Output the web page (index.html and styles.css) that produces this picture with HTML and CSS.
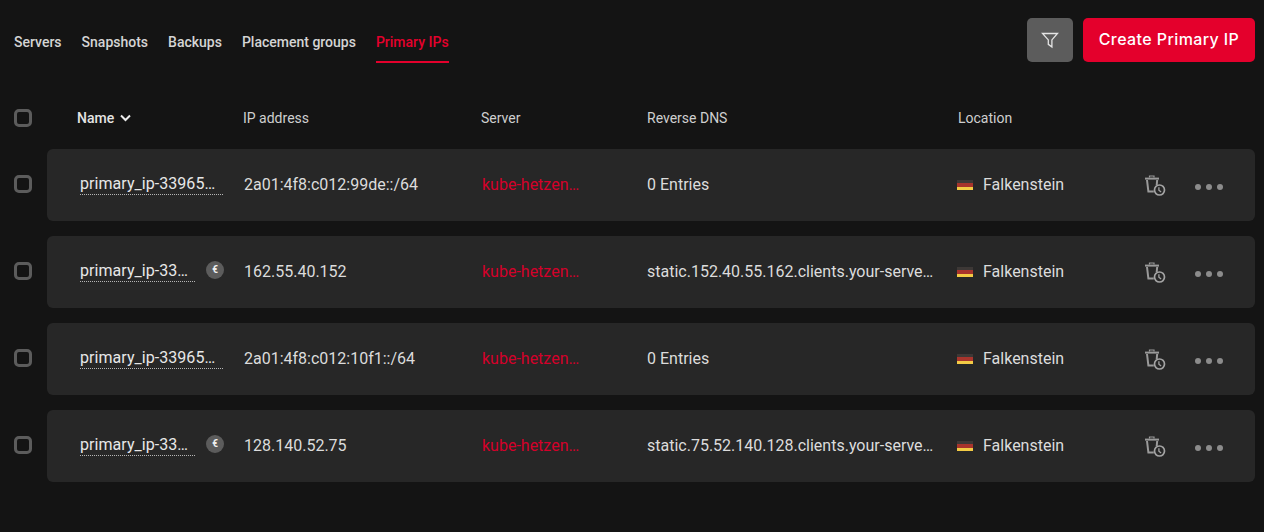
FILE: index.html
```html
<!DOCTYPE html>
<html lang="en">
<head>
<meta charset="utf-8">
<title>Primary IPs</title>
<link rel="stylesheet" href="styles.css">
</head>
<body>
<svg class="defs" width="0" height="0" aria-hidden="true">
  <symbol id="sched" viewBox="0 0 24 24">
    <path d="M0 3.6h14" fill="none" stroke="#9a9a9a" stroke-width="2"/>
    <path d="M4.5 2.6V1h4.5v1.6" fill="none" stroke="#9a9a9a" stroke-width="1.2"/>
    <path d="M2 5l1.4 11.6h5.4M12.2 5l-.5 5" fill="none" stroke="#9a9a9a" stroke-width="2"/>
    <circle cx="14.5" cy="15" r="5" fill="#272727" stroke="#a4a4a4" stroke-width="1.7"/>
    <path d="M13.9 12.2v3l2.2 1.9" fill="none" stroke="#a4a4a4" stroke-width="1.3"/>
  </symbol>
</svg>
<header class="topbar">
  <nav class="tabs">
    <a class="tab">Servers</a>
    <a class="tab">Snapshots</a>
    <a class="tab">Backups</a>
    <a class="tab">Placement groups</a>
    <a class="tab tab-active">Primary IPs</a>
  </nav>
  <div class="actions">
    <button class="filter-btn" aria-label="Filter">
      <svg width="18" height="18" viewBox="0 0 18 18"><path d="M1.5 2.5h15l-5.6 6.4v7l-3.6-2.6V8.9z" fill="none" stroke="#e4e4e4" stroke-width="1.3" stroke-linejoin="miter"/></svg>
    </button>
    <button class="create-btn">Create Primary IP</button>
  </div>
</header>

<div class="head">
  <span class="check"></span>
  <div class="cols head-cols">
    <span class="h-name">Name <svg width="11" height="8" viewBox="0 0 11 8"><path d="M1 1.5l4.5 4.5 4.5-4.5" fill="none" stroke="#ececec" stroke-width="2"/></svg></span>
    <span class="h-ip">IP address</span>
    <span class="h-server">Server</span>
    <span class="h-dns">Reverse DNS</span>
    <span class="h-loc">Location</span>
  </div>
</div>

<main class="list">
  <div class="row">
    <span class="check"></span>
    <div class="card cols">
      <div class="c-name"><span class="name">primary_ip-33965…</span></div>
      <span class="c-ip">2a01:4f8:c012:99de::/64</span>
      <span class="c-server">kube-hetzen…</span>
      <span class="c-dns">0 Entries</span>
      <span class="c-loc"><i class="flag"></i>Falkenstein</span>
      <svg class="sched"><use href="#sched"/></svg>
      <span class="dots"><i></i><i></i><i></i></span>
    </div>
  </div>
  <div class="row">
    <span class="check"></span>
    <div class="card cols">
      <div class="c-name"><span class="name short">primary_ip-33…</span><span class="euro">€</span></div>
      <span class="c-ip">162.55.40.152</span>
      <span class="c-server">kube-hetzen…</span>
      <span class="c-dns">static.152.40.55.162.clients.your-serve…</span>
      <span class="c-loc"><i class="flag"></i>Falkenstein</span>
      <svg class="sched"><use href="#sched"/></svg>
      <span class="dots"><i></i><i></i><i></i></span>
    </div>
  </div>
  <div class="row">
    <span class="check"></span>
    <div class="card cols">
      <div class="c-name"><span class="name">primary_ip-33965…</span></div>
      <span class="c-ip">2a01:4f8:c012:10f1::/64</span>
      <span class="c-server">kube-hetzen…</span>
      <span class="c-dns">0 Entries</span>
      <span class="c-loc"><i class="flag"></i>Falkenstein</span>
      <svg class="sched"><use href="#sched"/></svg>
      <span class="dots"><i></i><i></i><i></i></span>
    </div>
  </div>
  <div class="row">
    <span class="check"></span>
    <div class="card cols">
      <div class="c-name"><span class="name short">primary_ip-33…</span><span class="euro">€</span></div>
      <span class="c-ip">128.140.52.75</span>
      <span class="c-server">kube-hetzen…</span>
      <span class="c-dns">static.75.52.140.128.clients.your-serve…</span>
      <span class="c-loc"><i class="flag"></i>Falkenstein</span>
      <svg class="sched"><use href="#sched"/></svg>
      <span class="dots"><i></i><i></i><i></i></span>
    </div>
  </div>
</main>
</body>
</html>
```
FILE: styles.css
```css
* { box-sizing: border-box; }
html, body { margin: 0; height: 100%; }
body {
  background: #141414;
  color: #dcdcdc;
  font-family: Roboto, "Liberation Sans", sans-serif;
  font-size: 16px;
  padding: 18px 9px 0 14px;
  overflow: hidden;
}
.defs { position: absolute; }

.topbar { display: flex; justify-content: space-between; align-items: flex-start; height: 44px; }
.tabs { display: flex; gap: 20px; height: 45px; }
.tab {
  font-size: 14px;
  font-weight: 500;
  line-height: 16px;
  padding-top: 16px;
  color: #d4d4d4;
}
.tab-active { color: #e4002c; border-bottom: 2px solid #e4002c; }
.actions { display: flex; gap: 10px; }
.filter-btn {
  width: 46px; height: 44px; padding: 0; border: 0; border-radius: 5px;
  background: #5c5c5c;
  display: flex; align-items: center; justify-content: center;
}
.create-btn {
  width: 172px; height: 44px; padding: 0 0 2px; border: 0; border-radius: 5px;
  background: #e4002c;
  color: #fff;
  font-family: Inter, Roboto, sans-serif;
  font-size: 16px;
  font-weight: 500;
  letter-spacing: .4px;
}

.check {
  display: block;
  width: 18px; height: 18px;
  border: 3px solid #5c5c5c;
  border-radius: 5px;
  flex: none;
}
.head { display: flex; align-items: center; height: 22px; margin-top: 45px; }
.head-cols { font-size: 14px; line-height: 16px; color: #cfcfcf; }
.h-name { margin-left: 45px; width: 166px; color: #e4e4e4; font-weight: 500; display: flex; align-items: center; gap: 6px; }
.h-ip { width: 238px; }
.h-server { width: 166px; }
.h-dns { width: 311px; }

.list { display: flex; flex-direction: column; gap: 15px; margin-top: 20px; }
.row { display: flex; align-items: center; }
.row .check { margin-right: 15px; margin-top: -2px; }
.cols { display: flex; align-items: center; }
.card {
  width: 1208px; height: 72px;
  background: #272727;
  border-radius: 6px;
  padding-left: 33px;
  padding-bottom: 1px;
}
.c-name { width: 164px; display: flex; align-items: center; }
.name {
  width: 143px;
  margin-top: 1px;
  padding: 0 0 1px 0;
  line-height: 18px;
  font-size: 16px;
  font-weight: 400;
  letter-spacing: .05px;
  color: #e8e8e8;
  border-bottom: 1px dotted #b5b5b5;
  white-space: nowrap;
}
.name.short { width: 115px; }
.euro {
  width: 18px; height: 18px; margin: -4px 0 0 11px;
  border-radius: 50%;
  background: #5c5c5c;
  color: #eee;
  font-size: 10px;
  font-weight: 700;
  line-height: 18px;
  text-align: center;
}
.c-ip { width: 238px; }
.c-server { width: 165px; color: #d4002a; }
.c-dns { width: 310px; white-space: nowrap; }
.c-loc { width: 188px; display: flex; align-items: center; }
.flag {
  width: 16px; height: 10px; margin-right: 10px;
  background: linear-gradient(#3d3836 0 33%, #a8342c 33% 66%, #f3cb45 66%);
}
.sched { width: 24px; height: 24px; margin: 4px 26px 0 0; }
.dots { display: flex; gap: 5px; margin-top: 4px; }
.dots i { width: 6px; height: 6px; border-radius: 50%; background: #8c8c8c; }
```
